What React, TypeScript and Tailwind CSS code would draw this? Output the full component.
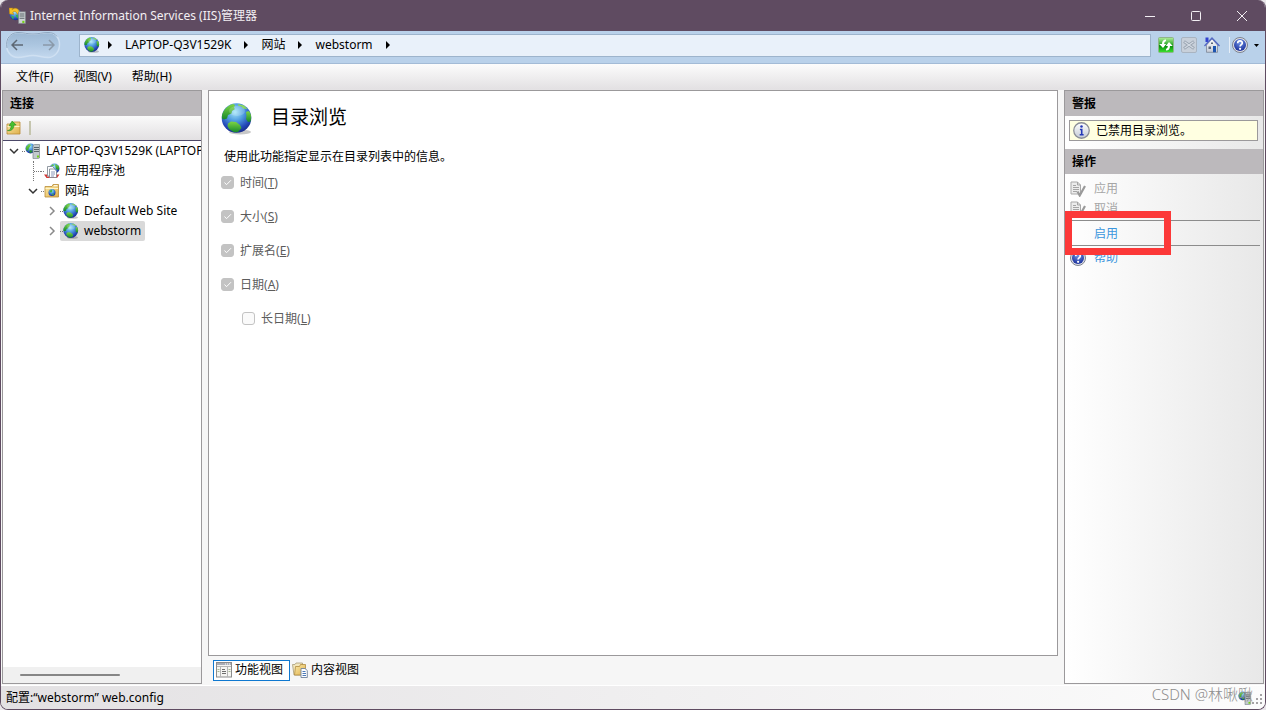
import React from "react";

type IconProps = { className?: string };

function GradientDefs() {
  return (
    <svg className="absolute size-0" aria-hidden="true">
      <defs>
        <radialGradient id="sea" cx="0.45" cy="0.3" r="0.75">
          <stop offset="0" stopColor="#a4e6f8" />
          <stop offset="0.4" stopColor="#4f9ce0" />
          <stop offset="0.75" stopColor="#2347b8" />
          <stop offset="1" stopColor="#16247c" />
        </radialGradient>
        <linearGradient id="land" x1="0" y1="0" x2="0" y2="1">
          <stop offset="0" stopColor="#7fd644" />
          <stop offset="1" stopColor="#15882c" />
        </linearGradient>
        <linearGradient id="folder" x1="0" y1="0" x2="1" y2="1">
          <stop offset="0" stopColor="#fbe9a8" />
          <stop offset="1" stopColor="#dfb04c" />
        </linearGradient>
        <linearGradient id="go" x1="0" y1="0" x2="0" y2="1">
          <stop offset="0" stopColor="#b4ee9c" />
          <stop offset="0.4" stopColor="#3fb43a" />
          <stop offset="0.55" stopColor="#058a0b" />
          <stop offset="1" stopColor="#3fe632" />
        </linearGradient>
        <radialGradient id="help" cx="0.5" cy="0.3" r="0.7">
          <stop offset="0" stopColor="#6f93e6" />
          <stop offset="1" stopColor="#1a2f9a" />
        </radialGradient>
        <linearGradient id="pill" x1="0" y1="0" x2="0" y2="1">
          <stop offset="0" stopColor="#9cb8d4" />
          <stop offset="0.5" stopColor="#acc6e0" />
          <stop offset="1" stopColor="#c3d8ee" />
        </linearGradient>
        <linearGradient id="silver" x1="0" y1="0" x2="0" y2="1">
          <stop offset="0" stopColor="#ffffff" />
          <stop offset="1" stopColor="#c4cad6" />
        </linearGradient>
      </defs>
    </svg>
  );
}

function GlobeIcon({ className = "size-4" }: IconProps) {
  return (
    <svg viewBox="0 0 32 32" className={`shrink-0 ${className}`} aria-hidden="true">
      <ellipse cx="19" cy="29" rx="11" ry="2.5" fill="#000" opacity="0.22" />
      <circle cx="15.5" cy="15" r="14.8" fill="url(#sea)" />
      <path d="M2.500 8.500C4.500 4.500 8 2 12 1l2 1-1 3 1 1-3 2-.5 2.500L7 12l-1 3.500-3 1-2-1C.6 13 1.300 10.500 2.500 8.500z" fill="url(#land)" />
      <path d="M7 20.500l3-2 5 .5 4 3 1.500 3-3.500 4-4 .3-5-3.300-1.500-3z" fill="url(#land)" />
      <path d="M25 9l2.500-1 1.500 1.500c1.500 3 1.500 6 .5 9l-2.500.5-2-3 .5-3z" fill="url(#land)" />
      <path d="M17 1l6 1.500 3.500 3.500-4.500-.5-1.500-2-3-.5z" fill="#8bd85c" />
      <ellipse cx="16" cy="8" rx="8" ry="5" fill="#fff" opacity="0.18" />
    </svg>
  );
}

function ServerIcon({ className = "size-4" }: IconProps) {
  return (
    <svg viewBox="0 0 16 16" className={`shrink-0 ${className}`} aria-hidden="true">
      <circle cx="5.500" cy="5.500" r="5" fill="url(#sea)" />
      <path d="M1 4l3-3 2 1-2 3-1 3-2-1zM5 7l3 1-2 2-2-1z" fill="url(#land)" />
      <path d="M8 2.500L9.500 1.500h5V15l-1 .6H8z" fill="#c3cacd" stroke="#798287" strokeWidth="0.7" />
      <path d="M9 4.500h5M9 6.500h5M9 8.500h5" stroke="#5a6469" />
      <rect x="12" y="12.500" width="2" height="2" fill="#73d216" />
    </svg>
  );
}

function AppIcon({ className = "size-4" }: IconProps) {
  return (
    <svg viewBox="0 0 16 16" className={`shrink-0 ${className}`} aria-hidden="true">
      <circle cx="6" cy="7" r="5.500" fill="url(#sea)" />
      <path d="M1.500 8l3 1-.5 3zM6 7l3 1-1 3z" fill="#39b54a" />
      <path d="M0 1h4l-1.200 1.500c3-2.500 6-1.500 7 2L8 7C7 4 5 3.500 3.500 5L4.500 7 .5 6.500z" fill="#f7c325" stroke="#b17a0c" strokeWidth="0.5" />
      <path d="M9 4.500h6.500v11H9z" fill="#cdd3d5" stroke="#7e8589" strokeWidth="0.6" />
      <path d="M10 6.500h4.500M10 8.500h4.500M10 10.500h4.500" stroke="#5b6468" />
      <rect x="12.500" y="13" width="2" height="2" fill="#73d216" />
    </svg>
  );
}

function PoolIcon({ className = "size-4" }: IconProps) {
  return (
    <svg viewBox="0 0 16 16" className={`shrink-0 ${className}`} aria-hidden="true">
      <circle cx="10.500" cy="5.500" r="5" fill="url(#sea)" />
      <path d="M11 1l4 2v4l-3-1zM7 3l2-2 1 2z" fill="url(#land)" />
      <path d="M0 11.500h3v2h9v-2h3.500L13 15H2.500z" fill="#d23a36" />
      <path d="M3.500 3.500h5l2 2V13h-7z" fill="#fff" stroke="#77808c" strokeWidth="0.8" />
      <path d="M5.500 6h5l2 2v6.500h-7z" fill="#fff" stroke="#77808c" strokeWidth="0.8" />
      <path d="M7 9h4M7 11h4M7 13h3" stroke="#6d7fa8" strokeWidth="0.8" />
    </svg>
  );
}

function SitesIcon({ className = "size-4" }: IconProps) {
  return (
    <svg viewBox="0 0 16 16" className={`shrink-0 ${className}`} aria-hidden="true">
      <path d="M1 3.500h7l1-2h5.500V14H1z" fill="url(#folder)" stroke="#b98b35" strokeWidth="0.8" />
      <path d="M10 2.700h3.500" stroke="#fff" />
      <path d="M1.500 5.500h12.500" stroke="#fff4c8" />
      <circle cx="8" cy="9.500" r="3.500" fill="url(#sea)" />
      <path d="M5.500 8l2-1.500 1 1.500-1.500 2zM7.500 11l2.500-.5-1 2z" fill="#3db33d" />
    </svg>
  );
}

function ConnectIcon({ className = "size-4" }: IconProps) {
  return (
    <svg viewBox="0 0 16 16" className={`shrink-0 ${className}`} aria-hidden="true">
      <path d="M2 4h5.500l1-2H15v12H2z" fill="url(#folder)" stroke="#b98b35" strokeWidth="0.8" />
      <path d="M2.500 6.500h12" stroke="#fff4c8" />
      <path d="M2.500 10.500C5 10.500 6.200 8.500 6 5.500L4 5.800 7.200 1l4 4H9c0 4-3 6.500-6.500 5.500z" fill="#48c02f" stroke="#2b8a1c" strokeWidth="0.6" />
    </svg>
  );
}

function HelpIcon({ className = "size-4" }: IconProps) {
  return (
    <svg viewBox="0 0 16 16" className={`shrink-0 ${className}`} aria-hidden="true">
      <circle cx="8" cy="8" r="7.500" fill="#dfe1e7" stroke="#7d828e" />
      <circle cx="8" cy="8" r="6" fill="url(#help)" />
      <path d="M5.700 6.200C5.700 3.200 10.400 3.300 10.300 6c0 1.700-2.200 1.600-2.200 3.600" fill="none" stroke="#fff" strokeWidth="1.700" />
      <circle cx="8.100" cy="11.800" r="1.100" fill="#fff" />
    </svg>
  );
}

function InfoIcon({ className = "size-4" }: IconProps) {
  return (
    <svg viewBox="0 0 16 16" className={`shrink-0 ${className}`} aria-hidden="true">
      <circle cx="8" cy="8" r="7.300" fill="url(#silver)" stroke="#8b8e97" strokeWidth="1.200" />
      <circle cx="8" cy="4.200" r="1.200" fill="#2438b8" />
      <path d="M6.500 7h1.700v4.500M6.300 12h3.700" fill="none" stroke="#2438b8" strokeWidth="1.500" />
    </svg>
  );
}

function ApplyIcon({ className = "size-4" }: IconProps) {
  return (
    <svg viewBox="0 0 16 16" className={`shrink-0 ${className}`} aria-hidden="true">
      <path d="M1 1h6.500l3 3v9H1z" fill="#ececec" stroke="#a9a9a9" />
      <path d="M7.500 1v3h3M3 4.500h3M3 6.500h6M3 8.500h6M3 10.500h4" fill="none" stroke="#a5a5a5" />
      <path d="M7.500 10.500l2.200 4L15 5" fill="none" stroke="#9a9a9a" strokeWidth="2.200" />
    </svg>
  );
}

function RefreshIcon({ className = "size-4" }: IconProps) {
  return (
    <svg viewBox="0 0 16 16" className={`shrink-0 ${className}`} aria-hidden="true">
      <rect x="0.500" y="0.500" width="15" height="15" rx="1" fill="url(#go)" stroke="#8fb58a" />
      <path d="M8 2.500C5.500 2.500 4 4 4 7H1.200L5 11l3.200-4H6.200c0-1.500.5-2.500 1.800-2.800zM8 13.500c2.500 0 4-1.500 4-4.500h2.800L11 5 7.800 9h2c0 1.500-.5 2.500-1.800 2.800z" fill="#fff" />
    </svg>
  );
}

function StopIcon({ className = "size-4" }: IconProps) {
  return (
    <svg viewBox="0 0 16 16" className={`shrink-0 ${className}`} aria-hidden="true">
      <rect x="0.500" y="0.500" width="15" height="15" rx="1.500" fill="#c8d0da" stroke="#a9b4c1" />
      <path d="M3 4.500l10 7M13 4.500l-10 7" stroke="#98a3b0" strokeWidth="2.800" />
      <path d="M3.500 4.800l9 6.400M12.500 4.800l-9 6.400" stroke="#d3dae3" strokeWidth="1.300" />
    </svg>
  );
}

function HomeIcon({ className = "size-4" }: IconProps) {
  return (
    <svg viewBox="0 0 16 16" className={`shrink-0 ${className}`} aria-hidden="true">
      <path d="M1.500 0.500h3V5h-3z" fill="#3343cf" />
      <path d="M2.500 8L8 2l5.500 6v7.300h-11z" fill="url(#silver)" stroke="#747c8c" strokeWidth="0.700" />
      <path d="M.5 9L8 1l7.500 8" fill="none" stroke="#5468c4" strokeWidth="1.300" />
      <path d="M9 9h3v6.300H9z" fill="#1d55b0" />
      <path d="M4.500 9.500h2.500V12H4.500z" fill="#5c6678" />
      <path d="M7 5.500h2V7H7z" fill="#5c6678" />
    </svg>
  );
}

function FeaturesIcon({ className = "size-4" }: IconProps) {
  return (
    <svg viewBox="0 0 16 16" className={`shrink-0 ${className}`} aria-hidden="true">
      <rect x="0.500" y="0.500" width="15" height="14.500" fill="#f5f5f2" stroke="#8c8c8c" />
      <path d="M1 2h14" stroke="#a9adb6" strokeWidth="2" />
      <path d="M9 2h1M11 2h1M13 2h1" stroke="#fff" />
      <path d="M1 4.500h14M4.500 5v10M11.500 5v10" stroke="#b5b5b5" />
      <path d="M6 7.500h3M6 9.500h4M6 11.500h4" stroke="#6e6e6e" />
      <path d="M1.500 7.500h2M1.500 9.500h2M12.500 7.500h2M12.500 9.500h2" stroke="#a8b890" />
    </svg>
  );
}

function ContentIcon({ className = "size-4" }: IconProps) {
  return (
    <svg viewBox="0 0 16 16" className={`shrink-0 ${className}`} aria-hidden="true">
      <path d="M.5 2.500h2.500l1-1.500h6.500v12H2z" fill="#f3e7bd" stroke="#a89c78" strokeWidth="0.800" />
      <path d="M3.500 4.500h4l1-2h5V13h-11z" fill="url(#folder)" stroke="#b08a3e" strokeWidth="0.800" />
      <path d="M9 6.500h4l2.300 2v7H9z" fill="#fff" stroke="#71829c" strokeWidth="0.900" />
      <path d="M10.500 9.500h3M10.500 11.500h3.500M10.500 13.500h3.500" stroke="#4b79b8" />
    </svg>
  );
}

function TitleBar() {
  return (
    <header className="flex h-[31px] shrink-0 items-center bg-[#5f4b61] pl-2 text-[#f3eff3]">
      <AppIcon className="size-[17px]" />
      <h1 className="ml-1 flex-1">Internet Information Services (IIS)管理器</h1>
      <button type="button" aria-label="最小化" className="flex h-full w-[46px] items-center justify-center">
        <svg viewBox="0 0 10 10" className="size-2.5" stroke="currentColor">
          <path d="M0 5.500h10" />
        </svg>
      </button>
      <button type="button" aria-label="最大化" className="flex h-full w-[46px] items-center justify-center">
        <svg viewBox="0 0 10 10" className="size-2.5" fill="none" stroke="currentColor">
          <rect x="0.500" y="0.500" width="9" height="9" rx="1" />
        </svg>
      </button>
      <button type="button" aria-label="关闭" className="flex h-full w-[46px] items-center justify-center">
        <svg viewBox="0 0 10 10" className="size-2.5" stroke="currentColor">
          <path d="M0 0l10 10M10 0L0 10" />
        </svg>
      </button>
    </header>
  );
}

function CrumbArrow() {
  return (
    <svg viewBox="0 0 4 8" className="h-2 w-1 shrink-0" aria-hidden="true">
      <path d="M0 0l4 4-4 4z" fill="#000" />
    </svg>
  );
}

function AddressBar() {
  return (
    <div className="flex h-[33px] shrink-0 items-center border-b border-[#a3bbd6] bg-[#b9d1ea] pb-1 pl-1 pr-1.5">
      <div className="grid">
        <svg viewBox="0 0 56 28" className="col-start-1 row-start-1 h-7 w-14" aria-hidden="true">
          <path
            d="M13 1.500c6 0 9 1.500 15 1.500s9-1.500 15-1.500c7 0 11.500 5 11.500 12S50 26.500 43 26.500c-6 0-9-2-15-2s-9 2-15 2C6 26.500 1.500 21 1.500 13.500S6 1.500 13 1.500z"
            fill="url(#pill)"
            stroke="#cfe0f2"
            strokeWidth="1.500"
          />
          <path d="M2 17C0 7 6 1.500 13 1.500c6 0 9 1.500 15 1.500s9-1.500 15-1.500c4 0 7 1 9 4" fill="none" stroke="#8da5bf" />
        </svg>
        <div className="z-10 col-start-1 row-start-1 flex items-center justify-between px-1.5">
          <button type="button" aria-label="后退" className="text-[#5d6874]">
            <svg viewBox="0 0 12 12" className="size-3" fill="none" stroke="currentColor" strokeWidth="1.500">
              <path d="M12 6H1M6 1L1 6l5 5" />
            </svg>
          </button>
          <button type="button" aria-label="前进" className="text-[#8a99a9]">
            <svg viewBox="0 0 12 12" className="size-3" fill="none" stroke="currentColor" strokeWidth="1.500">
              <path d="M0 6h11M6 1l5 5-5 5" />
            </svg>
          </button>
        </div>
      </div>
      <nav aria-label="路径" className="ml-[18px] flex h-[23px] flex-1 items-center border border-[#9db4cc] bg-[#e9f1fa] pl-1">
        <GlobeIcon />
        <span className="ml-2 flex items-center gap-[13px]">
          <CrumbArrow />
          <a href="#server">LAPTOP-Q3V1529K</a>
          <CrumbArrow />
          <a href="#sites">网站</a>
          <CrumbArrow />
          <a href="#webstorm">webstorm</a>
          <CrumbArrow />
        </span>
      </nav>
      <div className="ml-[7px] flex items-center gap-[7px]">
        <button type="button" aria-label="刷新">
          <RefreshIcon />
        </button>
        <button type="button" aria-label="停止" disabled>
          <StopIcon />
        </button>
        <button type="button" aria-label="主页">
          <HomeIcon />
        </button>
        <button type="button" aria-label="帮助" className="ml-0.5 flex items-center gap-1.5 border-l border-[#e6eef7] pl-0.5">
          <HelpIcon />
          <svg viewBox="0 0 5 3" className="h-[3px] w-[5px]" aria-hidden="true">
            <path d="M0 0h5L2.500 3z" fill="#000" />
          </svg>
        </button>
      </div>
    </div>
  );
}

function MenuBar() {
  return (
    <nav aria-label="菜单" className="flex h-[26px] shrink-0 items-center gap-5 border-b border-[#e4e2e4] bg-linear-to-b from-[#fcfcfc] to-[#e3e1e3] pl-[15px]">
      <button type="button">文件(F)</button>
      <button type="button">视图(V)</button>
      <button type="button">帮助(H)</button>
    </nav>
  );
}

type Node = {
  label: string;
  icon: React.ReactNode;
  indent: string;
  state: "open" | "closed" | "leaf";
  selected?: boolean;
};

const tree: Node[] = [
  { label: "LAPTOP-Q3V1529K (LAPTOP", icon: <ServerIcon />, indent: "pl-0", state: "open" },
  { label: "应用程序池", icon: <PoolIcon />, indent: "pl-[19px]", state: "leaf" },
  { label: "网站", icon: <SitesIcon />, indent: "pl-[19px]", state: "open" },
  { label: "Default Web Site", icon: <GlobeIcon />, indent: "pl-[38px]", state: "closed" },
  { label: "webstorm", icon: <GlobeIcon />, indent: "pl-[38px]", state: "closed", selected: true },
];

function Expander({ node }: { node: Node }) {
  if (node.state === "leaf") {
    return (
      <span className="flex h-5 w-[19px] shrink-0 items-center justify-end">
        <span className="h-5 border-l border-dotted border-[#777]" />
        <span className="w-[7px] border-t border-dotted border-[#777]" />
      </span>
    );
  }
  return (
    <button
      type="button"
      aria-label={node.label}
      aria-expanded={node.state === "open"}
      className="flex h-5 w-[19px] shrink-0 items-center justify-center"
    >
      {node.state === "open" ? (
        <svg viewBox="0 0 10 10" className="ml-0.5 size-2.5" fill="none" stroke="#333" strokeWidth="1.500">
          <path d="M1 3l4 4 4-4" />
        </svg>
      ) : (
        <svg viewBox="0 0 10 10" className="ml-0.5 size-2.5" fill="none" stroke="#8a8a8a" strokeWidth="1.500">
          <path d="M3 1l4 4-4 4" />
        </svg>
      )}
    </button>
  );
}

function PanelTitle({ children }: { children: React.ReactNode }) {
  return <h2 className="flex h-[25px] shrink-0 items-center bg-[#bcb9bc] pl-[7px] font-bold">{children}</h2>;
}

function Connections() {
  return (
    <aside className="flex w-[200px] shrink-0 flex-col border border-[#9b999b] bg-white">
      <PanelTitle>连接</PanelTitle>
      <div className="flex h-[25px] shrink-0 items-center gap-2 border-b border-[#4c4868] bg-linear-to-b from-[#fafafa] to-[#e2e0e2] pl-0.5">
        <button type="button" aria-label="连接到服务器">
          <ConnectIcon />
        </button>
        <span className="h-3.5 w-0.5 bg-[#c5c5ae]" />
      </div>
      <ul className="flex-1 overflow-hidden">
        {tree.map((node) => (
          <li key={node.label} className={`flex h-5 items-center whitespace-nowrap ${node.indent}`}>
            <Expander node={node} />
            <a
              href="#node"
              className={`flex h-5 shrink-0 items-center rounded-xs pr-1 ${node.selected ? "bg-[#d9d9d9]" : ""}`}
            >
              <span className="w-[3px] border-t border-dotted border-[#777]" />
              {node.icon}
              <span className="ml-[5px]">{node.label}</span>
            </a>
          </li>
        ))}
      </ul>
      <div className="flex h-4 shrink-0 items-center bg-[#f0f0f0] pl-[17px]">
        <span className="h-0.5 w-[100px] rounded-full bg-[#868686]" />
      </div>
    </aside>
  );
}

const fields = [
  { id: "time", text: "时间", mnemonic: "T", checked: true, indent: "pl-0" },
  { id: "size", text: "大小", mnemonic: "S", checked: true, indent: "pl-0" },
  { id: "extension", text: "扩展名", mnemonic: "E", checked: true, indent: "pl-0" },
  { id: "date", text: "日期", mnemonic: "A", checked: true, indent: "pl-0" },
  { id: "long-date", text: "长日期", mnemonic: "L", checked: false, indent: "pl-[21px]" },
];

function DirectoryBrowsing() {
  return (
    <main className="flex min-w-0 flex-1 flex-col">
      <section className="flex-1 border border-[#9b999b] bg-white pl-3 pt-3">
        <div className="flex items-start gap-[18px]">
          <GlobeIcon className="size-8" />
          <h2 className="text-[19px] leading-7">目录浏览</h2>
        </div>
        <p className="ml-[3px] mt-3.5 leading-4">使用此功能指定显示在目录列表中的信息。</p>
        {fields.map((field) => (
          <div key={field.id} className={`flex h-[34px] items-center gap-1.5 ${field.indent}`}>
            <span className="grid">
              <input
                id={field.id}
                type="checkbox"
                disabled
                defaultChecked={field.checked}
                className="peer col-start-1 row-start-1 size-[13px] appearance-none rounded-[3px] border border-[#c3c3c3] bg-[#fafafa] checked:bg-[#c3c3c3]"
              />
              <svg
                viewBox="0 0 13 13"
                className="invisible col-start-1 row-start-1 size-[13px] peer-checked:visible"
                fill="none"
                stroke="#fff"
                aria-hidden="true"
              >
                <path d="M3.500 6.500l2 2.200 4.500-4.500" />
              </svg>
            </span>
            <label htmlFor={field.id} className="pt-0.5 text-[#5c5c5c]">
              {field.text}(<u>{field.mnemonic}</u>)
            </label>
          </div>
        ))}
      </section>
      <div role="tablist" className="flex h-7 shrink-0 items-center pl-[5px]">
        <button role="tab" aria-selected="true" type="button" className="flex h-[21px] items-center gap-[3px] border border-[#0f78d0] bg-white pl-0.5 pr-1.5">
          <FeaturesIcon />
          功能视图
        </button>
        <button role="tab" aria-selected="false" type="button" className="flex h-[21px] items-center gap-[3px] pl-0.5">
          <ContentIcon />
          内容视图
        </button>
      </div>
    </main>
  );
}

function Actions() {
  return (
    <aside className="flex w-[200px] shrink-0 flex-col border border-[#9b999b] bg-linear-to-r from-white to-[#e8e8e8]">
      <PanelTitle>警报</PanelTitle>
      <div className="h-[33px] px-1 pr-[5px] pt-1">
        <p className="flex h-[21px] items-center gap-1.5 border border-[#9b999b] bg-[#ffffe1] pl-[3px]">
          <InfoIcon className="size-[17px]" />
          已禁用目录浏览。
        </p>
      </div>
      <PanelTitle>操作</PanelTitle>
      <div className="relative pl-1 pr-[3px] pt-[5px] text-[#3a96dd]">
        <button type="button" disabled className="flex h-5 items-center gap-2 pl-px text-[#a6a6a6]">
          <ApplyIcon />
          应用
        </button>
        <button type="button" disabled className="flex h-5 items-center gap-2 pl-px text-[#a6a6a6]">
          <ApplyIcon />
          取消
        </button>
        <div className="mb-0.5 mt-px border-y border-[#8c8c8c] pb-px pt-[3px]">
          <a href="#enable" className="flex h-5 items-center pl-[25px]">
            启用
          </a>
        </div>
        <a href="#help" className="flex h-5 items-center gap-2 pl-px">
          <HelpIcon />
          帮助
        </a>
        {/* highlight around the enable action */}
        <div className="pointer-events-none absolute left-0 top-[37px] h-11 w-[106px] border-[7px] border-[#fc3838]" />
      </div>
    </aside>
  );
}

function StatusBar() {
  return (
    <footer className="relative flex h-6 shrink-0 items-center justify-between border-t border-white bg-linear-to-r from-[#e3e1e3] to-[#fcfcfc] pl-[5px] pr-0.5">
      <span>配置:“webstorm” web.config</span>
      <span className="flex items-center">
        <ServerIcon className="size-3.5" />
        <svg viewBox="0 0 11 11" className="mt-1 size-[11px]" fill="#a5a3a5" aria-hidden="true">
          <path d="M8 0h2v2H8zM4 4h2v2H4zM8 4h2v2H8zM0 8h2v2H0zM4 8h2v2H4zM8 8h2v2H8z" />
        </svg>
      </span>
      <span className="absolute right-3 top-0 text-[15px] leading-4 font-light text-[#8e8e8e]">CSDN @林啾啾</span>
    </footer>
  );
}

export default function App() {
  return (
    <div className="h-screen bg-[#e9e6ea]">
      <GradientDefs />
      <div className="flex h-full flex-col overflow-hidden rounded-lg border-x border-b border-[#5f4b61] bg-[#f6f6f6] font-['Noto_Sans','Noto_Sans_CJK_SC',sans-serif] text-[12px] leading-4 text-black">
        <TitleBar />
        <AddressBar />
        <MenuBar />
        <div className="flex min-h-0 flex-1 gap-1.5 px-px pb-px">
          <Connections />
          <DirectoryBrowsing />
          <Actions />
        </div>
        <StatusBar />
      </div>
    </div>
  );
}
